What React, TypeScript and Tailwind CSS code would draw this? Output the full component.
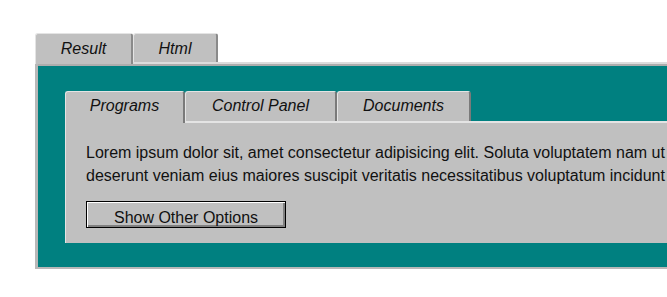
import React from "react";

export default function App() {
  return (
    <div className="w-[667px] h-[297px] bg-white overflow-hidden font-['Liberation_Sans',Arial,sans-serif] text-black">
      <div className="pl-[35px] pt-[33px]">
        <div className="flex h-[29px] items-start">
          <div className="relative z-10 w-[98px] h-[31px] bg-[#c0c0c0] border-l border-t border-[#e4e4e4] border-r-2 border-r-[#8a8a8a] rounded-t-[3px] italic text-[16px] leading-[20px] text-center pt-[5px] text-[#111]">
            Result
          </div>
          <div className="w-[85px] h-[29px] bg-[#c0c0c0] border-l border-t border-[#e4e4e4] border-r-2 border-r-[#8a8a8a] rounded-t-[3px] italic text-[16px] leading-[20px] text-center pt-[5px] text-[#111]">
            Html
          </div>
        </div>
        <div className="w-[700px] border-l-[3px] border-l-[#b8b8b8] border-t-2 border-t-[#dcdcdc] border-b-2 border-b-[#b8b8b8]">
          <div className="border-t-2 border-t-[#adadad] bg-[#008080] pl-[27px] pt-[25px] pb-[24px]">
            <div className="flex h-[30px] items-start">
              <div className="relative z-10 w-[120px] h-[32px] bg-[#c0c0c0] border-l border-t border-[#e4e4e4] border-r-2 border-r-[#7a7a7a] rounded-t-[3px] italic text-[16px] leading-[20px] text-center pt-[4px] text-[#111]">
                Programs
              </div>
              <div className="w-[152px] h-[30px] bg-[#c0c0c0] border-l border-t border-[#e4e4e4] border-r-2 border-r-[#7a7a7a] rounded-t-[3px] italic text-[16px] leading-[20px] text-center pt-[4px] text-[#111]">
                Control Panel
              </div>
              <div className="w-[134px] h-[30px] bg-[#c0c0c0] border-l border-t border-[#e4e4e4] border-r-2 border-r-[#7a7a7a] rounded-t-[3px] italic text-[16px] leading-[20px] text-center pt-[4px] text-[#111]">
                Documents
              </div>
            </div>
            <div className="bg-[#c0c0c0] border-t-2 border-t-[#e4e4e4] border-l border-l-[#e4e4e4] px-[20px] pt-[18px] pb-[15px]">
              <div className="text-[16px] leading-[23px] whitespace-nowrap text-[#111]">
                <div>Lorem ipsum dolor sit, amet consectetur adipisicing elit. Soluta voluptatem nam ut quas</div>
                <div>deserunt veniam eius maiores suscipit veritatis necessitatibus voluptatum incidunt quod</div>
              </div>
              <button className="mt-[14px] w-[200px] h-[27px] border border-black bg-[#c0c0c0] shadow-[inset_1px_1px_0_#ffffff,inset_-2px_-2px_0_#808080] text-[16px] leading-[20px] flex justify-center items-start pt-[6px] text-[#111]">
                Show Other Options
              </button>
            </div>
          </div>
        </div>
      </div>
    </div>
  );
}
